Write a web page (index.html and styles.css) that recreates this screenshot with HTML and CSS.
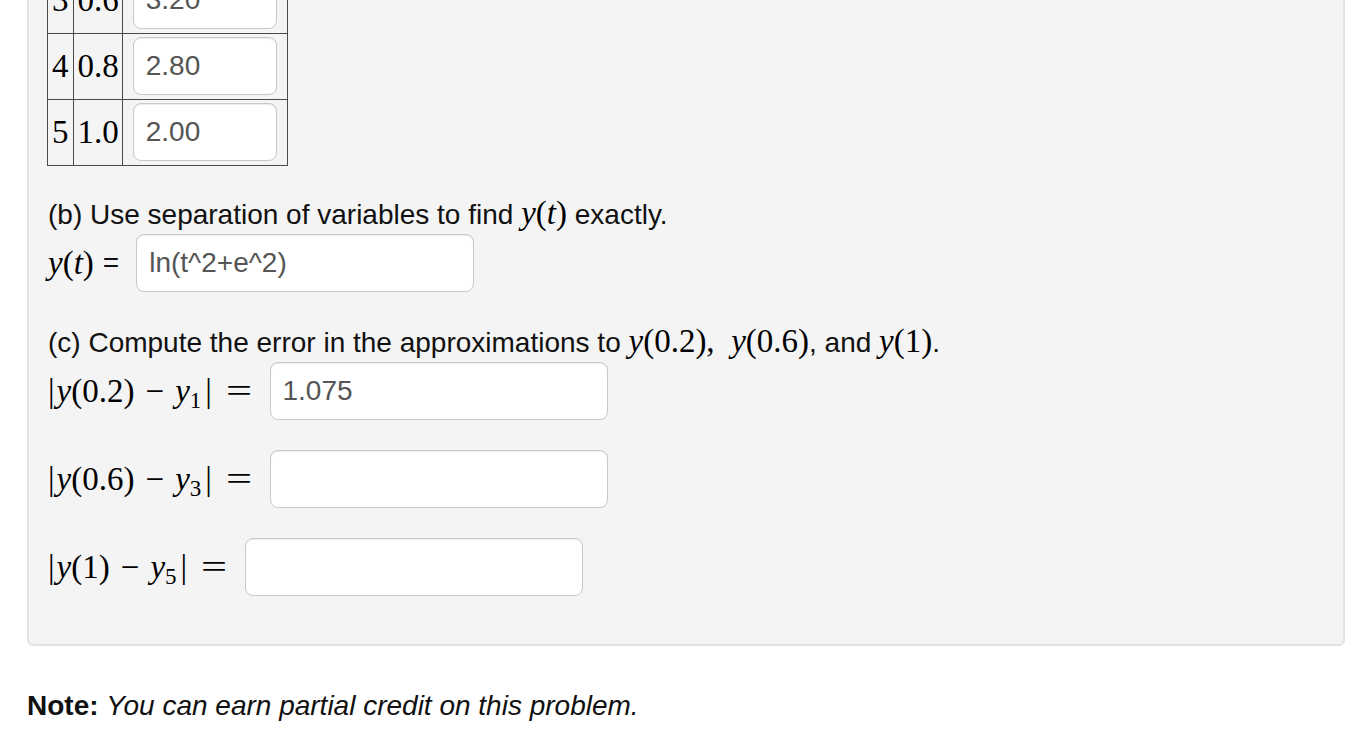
FILE: index.html
```html
<!DOCTYPE html>
<html lang="en">
<head>
    <meta charset="UTF-8">
    <meta name="viewport" content="width=device-width, initial-scale=1.0">
    <title>Euler's Method Problem</title>
    <link rel="stylesheet" href="styles.css">
</head>
<body>
    <main>
        <div class="problem">
            <table class="euler">
                <tr>
                    <td class="num">3</td>
                    <td class="num">0.6</td>
                    <td class="cell"><input type="text" value="3.20"></td>
                </tr>
                <tr>
                    <td class="num">4</td>
                    <td class="num">0.8</td>
                    <td class="cell"><input type="text" value="2.80"></td>
                </tr>
                <tr>
                    <td class="num">5</td>
                    <td class="num">1.0</td>
                    <td class="cell"><input type="text" value="2.00"></td>
                </tr>
            </table>

            <p class="question">(b) Use separation of variables to find <span class="math"><i>y</i>(<i>t</i>)</span> exactly.</p>
            <div class="answer-row first">
                <span class="math"><i>y</i>(<i>t</i>)</span><span class="eq-text">=</span>
                <input type="text" class="answer b-answer" value="ln(t^2+e^2)">
            </div>

            <p class="question gap">(c) Compute the error in the approximations to <span class="math"><i>y</i>(0.2),&nbsp; <i>y</i>(0.6)</span>, and <span class="math"><i>y</i>(1)</span>.</p>
            <div class="answer-row first">
                <span class="math"><span class="bar-l">|</span><i>y</i>(0.2)<span class="op">−</span><i>y</i><sub>1</sub><span class="bar-r">|</span><span class="rel">=</span></span>
                <input type="text" class="answer" value="1.075">
            </div>
            <div class="answer-row spaced">
                <span class="math"><span class="bar-l">|</span><i>y</i>(0.6)<span class="op">−</span><i>y</i><sub>3</sub><span class="bar-r">|</span><span class="rel">=</span></span>
                <input type="text" class="answer" value="">
            </div>
            <div class="answer-row spaced">
                <span class="math"><span class="bar-l">|</span><i>y</i>(1)<span class="op">−</span><i>y</i><sub>5</sub><span class="bar-r">|</span><span class="rel">=</span></span>
                <input type="text" class="answer" value="">
            </div>
        </div>

        <p class="note"><b>Note:</b> <i>You can earn partial credit on this problem.</i></p>
    </main>
</body>
</html>
```

FILE: styles.css
```css
body {
    margin: 0;
    padding: 0 25px 0 27px;
    font-family: "Liberation Sans", Arial, sans-serif;
    font-size: 28px;
    color: #111;
    background: #fff;
}

main {
    margin: 0;
}

.problem {
    margin-top: -54px;
    padding: 19px 19px 48px 19px;
    background-color: #f4f4f4;
    border: 2px solid #e2e2e2;
    border-radius: 6px;
}

.euler {
    border-collapse: collapse;
    margin-left: -1px;
}

.euler td {
    border: 1px solid #4a4a4a;
    vertical-align: middle;
}

.euler .num {
    font-family: "Liberation Serif", "Times New Roman", serif;
    font-size: 33px;
    padding: 0 4px;
    color: #000;
}

.euler .num + .num {
    padding: 0 3px 0 4px;
}

.euler .cell {
    padding: 3px 10px 4px 10px;
}

input {
    font-family: "Liberation Sans", Arial, sans-serif;
    font-size: 28px;
    color: #555;
    height: 58px;
    box-sizing: border-box;
    padding: 0 12px;
    border: 1px solid #c8c8c8;
    border-radius: 8px;
    background: #fff;
    box-shadow: inset 0 1px 1px rgba(0,0,0,0.075);
    outline: none;
}

.euler input {
    width: 144px;
    display: block;
}

.math {
    font-family: "Liberation Serif", "Times New Roman", serif;
    font-size: 33px;
    color: #000;
    white-space: nowrap;
}

.math sub {
    font-size: 23px;
    vertical-align: -6px;
    line-height: 0;
}

.bar-l {
    margin-right: 2px;
}

.bar-r {
    margin-left: 4px;
}

.op {
    margin: 0 11px;
}

.rel {
    margin-left: 14px;
    display: inline-block;
    transform: scaleX(1.4);
    transform-origin: left center;
}

.question {
    margin: 27px 0 0 0;
    line-height: 40px;
}

.question.gap {
    margin-top: 29px;
}

.answer-row {
    display: flex;
    align-items: center;
}

.answer-row.first {
    margin-top: -1px;
}

.answer-row.spaced {
    margin-top: 30px;
}

.eq-text {
    margin-left: 9px;
}

.answer {
    width: 338px;
    margin-left: 25px;
}

.answer.b-answer {
    margin-left: 17px;
}

.note {
    margin: 40px 0 0 0;
    line-height: 40px;
}
```
